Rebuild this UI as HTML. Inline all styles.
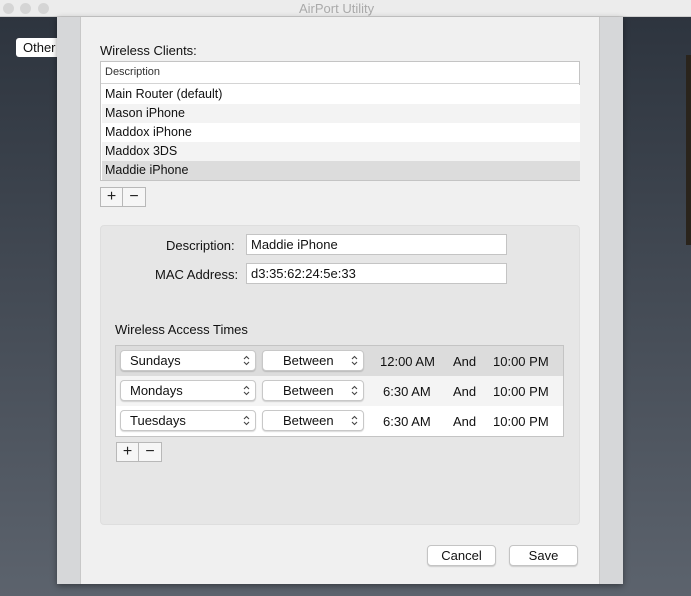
<!DOCTYPE html>
<html><head><meta charset="utf-8"><style>
*{margin:0;padding:0;box-sizing:border-box}
body{width:691px;height:596px;overflow:hidden;position:relative;font-family:"Liberation Sans",sans-serif;font-size:13px;color:#111;background:linear-gradient(#2c333d,#5c636d)}
.a{position:absolute}
.t{position:absolute;white-space:nowrap}
.row{position:absolute;left:1px;width:478px;height:19px;padding-left:3px;line-height:19px;font-size:12.5px}
.pop{position:absolute;height:21px;background:#fff;border:1px solid #c8c8c8;border-radius:4px;box-shadow:0 1px 1px rgba(0,0,0,.15);line-height:19px;font-size:13px}
.pop svg{position:absolute;right:5px;top:4px}
.btn{position:absolute;height:21px;background:#fff;border:1px solid #c4c4c4;border-radius:4px;box-shadow:0 1px 1px rgba(0,0,0,.15);text-align:center;line-height:19px;font-size:13px}
.pm{position:absolute;width:46px;height:20px;border:1px solid #b8b8b8;background:#f6f6f6}
.pm span{position:absolute;top:0;width:22px;height:18px;text-align:center;line-height:17px;font-size:16px;color:#222}
</style></head><body>
<div class="a" style="left:0;top:0;width:691px;height:17px;background:#ececec;border-bottom:1px solid #cfcfcf"></div>
<div class="a" style="left:3px;top:3px;width:11px;height:11px;border-radius:50%;background:#d5d5d5"></div>
<div class="a" style="left:20px;top:3px;width:11px;height:11px;border-radius:50%;background:#d5d5d5"></div>
<div class="a" style="left:38px;top:3px;width:11px;height:11px;border-radius:50%;background:#d5d5d5"></div>
<div class="t" style="left:299px;top:0;font-size:13px;line-height:17px;color:#aaa">AirPort Utility</div>
<div class="a" style="left:16px;top:38px;width:45px;height:19px;background:#fff;border-radius:3px;padding-left:7px;line-height:19px">Other</div>
<div class="a" style="left:686px;top:55px;width:5px;height:190px;background:#2a241c"></div>
<div class="a" style="left:57px;top:17px;width:566px;height:567px;background:#d6d7d9;box-shadow:0 2px 6px rgba(0,0,0,.4)"></div>
<div class="a" style="left:80px;top:17px;width:520px;height:567px;background:#f0f0f0;border-left:1px solid #c8c8c8;border-right:1px solid #c8c8c8"></div>

<div class="t" style="left:100px;top:43px">Wireless Clients:</div>
<div class="a" style="left:100px;top:61px;width:480px;height:120px;background:#fff;border:1px solid #c4c4c4">
<div class="t" style="left:4px;top:4px;font-size:11px;color:#333">Description</div>
<div class="a" style="left:0;top:21px;width:478px;height:1px;background:#d4d4d4"></div>
<div class="row" style="top:23px;background:#fff">Main Router (default)</div>
<div class="row" style="top:42px;background:#f3f3f3">Mason iPhone</div>
<div class="row" style="top:61px;background:#fff">Maddox iPhone</div>
<div class="row" style="top:80px;background:#f3f3f3">Maddox 3DS</div>
<div class="row" style="top:99px;background:#dcdcdc">Maddie iPhone</div>
</div>
<div class="pm" style="left:100px;top:187px"><span style="left:0;border-right:1px solid #b8b8b8">+</span><span style="left:22px">−</span></div>

<div class="a" style="left:100px;top:225px;width:480px;height:300px;background:#e6e6e6;border-radius:4px;border:1px solid #dedede"></div>
<div class="t" style="left:166px;top:238px">Description:</div>
<div class="a" style="left:246px;top:234px;width:261px;height:21px;background:#fff;border:1px solid #c4c4c4;padding-left:4px;line-height:19px">Maddie iPhone</div>
<div class="t" style="left:155px;top:267px">MAC Address:</div>
<div class="a" style="left:246px;top:263px;width:261px;height:21px;background:#fff;border:1px solid #c4c4c4;padding-left:4px;line-height:19px">d3:35:62:24:5e:33</div>

<div class="t" style="left:115px;top:322px">Wireless Access Times</div>
<div class="a" style="left:115px;top:345px;width:449px;height:92px;background:#fff;border:1px solid #c4c4c4">
<div class="a" style="left:0;top:0;width:447px;height:30px;background:#dcdcdc"></div>
<div class="a" style="left:0;top:30px;width:447px;height:30px;background:#f4f4f4"></div>
</div>

<div class="pop" style="left:120px;top:350px;width:136px;padding-left:9px">Sundays<svg width="7" height="11"><path d="M1 4 3.5 1.5 6 4M1 7 3.5 9.5 6 7" fill="none" stroke="#444" stroke-width="1.1"/></svg></div>
<div class="pop" style="left:262px;top:350px;width:102px;padding-left:20px">Between<svg width="7" height="11"><path d="M1 4 3.5 1.5 6 4M1 7 3.5 9.5 6 7" fill="none" stroke="#444" stroke-width="1.1"/></svg></div>
<div class="t" style="left:380px;top:354px">12:00 AM</div><div class="t" style="left:453px;top:354px">And</div><div class="t" style="left:493px;top:354px">10:00 PM</div>

<div class="pop" style="left:120px;top:380px;width:136px;padding-left:9px">Mondays<svg width="7" height="11"><path d="M1 4 3.5 1.5 6 4M1 7 3.5 9.5 6 7" fill="none" stroke="#444" stroke-width="1.1"/></svg></div>
<div class="pop" style="left:262px;top:380px;width:102px;padding-left:20px">Between<svg width="7" height="11"><path d="M1 4 3.5 1.5 6 4M1 7 3.5 9.5 6 7" fill="none" stroke="#444" stroke-width="1.1"/></svg></div>
<div class="t" style="left:383px;top:384px">6:30 AM</div><div class="t" style="left:453px;top:384px">And</div><div class="t" style="left:493px;top:384px">10:00 PM</div>

<div class="pop" style="left:120px;top:410px;width:136px;padding-left:9px">Tuesdays<svg width="7" height="11"><path d="M1 4 3.5 1.5 6 4M1 7 3.5 9.5 6 7" fill="none" stroke="#444" stroke-width="1.1"/></svg></div>
<div class="pop" style="left:262px;top:410px;width:102px;padding-left:20px">Between<svg width="7" height="11"><path d="M1 4 3.5 1.5 6 4M1 7 3.5 9.5 6 7" fill="none" stroke="#444" stroke-width="1.1"/></svg></div>
<div class="t" style="left:383px;top:414px">6:30 AM</div><div class="t" style="left:453px;top:414px">And</div><div class="t" style="left:493px;top:414px">10:00 PM</div>

<div class="pm" style="left:116px;top:442px"><span style="left:0;border-right:1px solid #b8b8b8">+</span><span style="left:22px">−</span></div>

<div class="btn" style="left:427px;top:545px;width:69px">Cancel</div>
<div class="btn" style="left:509px;top:545px;width:69px">Save</div>
</body></html>
